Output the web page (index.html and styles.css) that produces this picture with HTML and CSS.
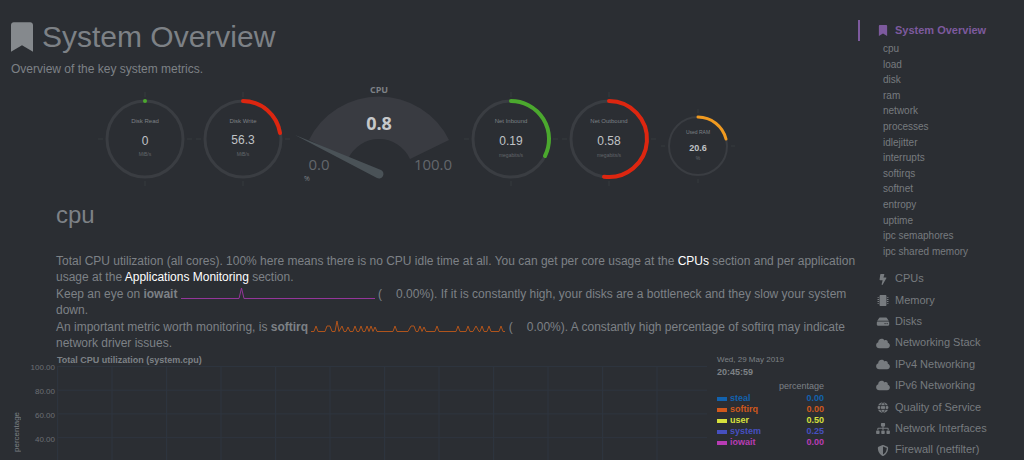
FILE: index.html
```html
<!DOCTYPE html>
<html lang="en">
<head>
  <meta charset="utf-8">
  <meta name="viewport" content="width=device-width, initial-scale=1">
  <title>System Overview</title>
  <link rel="stylesheet" href="styles.css">
</head>

<body>
<div class="page">
  <main class="main">
    <h1>
      <svg class="title-icon" viewBox="0 0 384 512"><path d="M0 512V48C0 21.49 21.49 0 48 0h288c26.51 0 48 21.49 48 48v464L192 400 0 512z"/></svg>
      System Overview
    </h1>
    <p class="intro">Overview of the key system metrics.</p>

    <!-- gauges -->
    <div class="gauges">
      <svg class="gauge" viewBox="-49 -49 98 98">
        <path class="ticks" d="M0 -47V-42M0 42V47M-47 0H-42M42 0H47"/>
        <circle class="track" r="38"/>
        <circle class="dot green" cy="-38" r="2"/>
        <text class="name" y="-16">Disk Read</text>
        <text class="value" y="6">0</text>
        <text class="unit" y="17">MiB/s</text>
      </svg>
      <svg class="gauge" viewBox="-49 -49 98 98">
        <path class="ticks" d="M0 -47V-42M0 42V47M-47 0H-42M42 0H47"/>
        <circle class="track" r="38"/>
        <path class="arc red" d="M0 -38A38 38 0 0 1 37 -6"/>
        <text class="name" y="-16">Disk Write</text>
        <text class="value" y="5">56.3</text>
        <text class="unit" y="17">MiB/s</text>
      </svg>
      <svg class="gauge-cpu" viewBox="-87 -91 170 105">
        <path class="dial" d="M-70 -34A78 78 0 0 1 70 -34L31 -15A34 34 0 0 0 -31 -15Z"/>
        <path class="needle" d="M-84 -39L2 -4A4 4 0 0 1 -2 4Z"/>
        <text class="cpu-name" y="-81">CPU</text>
        <text class="cpu-value" y="-44">0.8</text>
        <text class="cpu-limit" x="-60" y="-4">0.0</text>
        <text class="cpu-limit" x="54" y="-4">100.0</text>
        <text class="cpu-unit" x="-72" y="7">%</text>
      </svg>
      <svg class="gauge" viewBox="-49 -49 98 98">
        <path class="ticks" d="M0 -47V-42M0 42V47M-47 0H-42M42 0H47"/>
        <circle class="track" r="38"/>
        <path class="arc green" d="M0 -38A38 38 0 0 1 34 17"/>
        <text class="name" y="-16">Net Inbound</text>
        <text class="value" y="6">0.19</text>
        <text class="unit" y="18">megabits/s</text>
      </svg>
      <svg class="gauge" viewBox="-49 -49 98 98">
        <path class="ticks" d="M0 -47V-42M0 42V47M-47 0H-42M42 0H47"/>
        <circle class="track" r="38"/>
        <path class="arc red" d="M0 -38A38 38 0 1 1 -5 37.670"/>
        <text class="name" y="-16">Net Outbound</text>
        <text class="value" y="6">0.58</text>
        <text class="unit" y="18">megabits/s</text>
      </svg>
      <svg class="gauge-small" viewBox="-40 -40 80 82">
        <path class="ticks" d="M0 -37V-33M0 33V37M-37 0H-33M33 0H37"/>
        <circle class="track thin" r="29"/>
        <path class="arc thin orange" d="M0 -29A29 29 0 0 1 28 -7"/>
        <text class="name small" y="-12">Used RAM</text>
        <text class="value small" y="5">20.6</text>
        <text class="unit" y="14">%</text>
      </svg>
    </div>

    <section class="section">
      <h2>cpu</h2>
      <p>Total CPU utilization (all cores). 100% here means there is no CPU idle time at all. You can get per core usage at the <a href="#cpus">CPUs</a> section and per application usage at the <a href="#apps">Applications Monitoring</a> section.</p>
      <p>Keep an eye on <b>iowait</b>
        <svg class="spark iowait" viewBox="0 0 194 13"><path d="M0 11.5H58L60.5 1L63 11.5H194"/></svg>
        (<span class="num">0.00%</span>). If it is constantly high, your disks are a bottleneck and they slow your system down.</p>
      <p>An important metric worth monitoring, is <b>softirq</b>
        <svg class="spark softirq" viewBox="0 0 194 13"><path d="M0 11.5H3L5 6L7 11.5H14L16 6H19L21 11.5H24L26 1L28 11.5L31 6L33 11.5H35L37 7L39 11.5H42L44 6L46 11.5H48L50 6L52 11.5H54L56 6L58 11.5L60 6L62 11.5L64 7L66 11.5H82L84 6L86 11.5H97L100 6H103L105 11.5H107L109 6L111 11.5L113 7L115 11.5H124L126 6L128 11.5H145L147 6L149 11.5H155L157 6L159 11.5H162L165 6L168 11.5H169L171 6L173 11.5H176L178 6L180 11.5H188L190 6L192 11.5H194"/></svg>
        (<span class="num">0.00%</span>). A constantly high percentage of softirq may indicate network driver issues.</p>
    </section>

    <!-- system.cpu chart -->
    <div class="chart">
      <div class="ylabel">percentage</div>
      <div class="yaxis"><span>100.00</span><span>80.00</span><span>60.00</span><span>40.00</span></div>
      <div class="plot">
        <h3>Total CPU utilization (system.cpu)</h3>
        <svg class="grid" width="100%" height="120">
          <defs>
            <pattern id="cells" width="54.5" height="23.7" patternUnits="userSpaceOnUse"><path d="M0 .5H55M.5 0V24"/></pattern>
          </defs>
          <rect width="100%" height="120" fill="url(#cells)"/>
        </svg>
      </div>
      <div class="legend">
        <div>Wed, 29 May 2019</div>
        <div><b>20:45:59</b></div>
        <table>
          <thead><tr><th></th><th class="val">percentage</th></tr></thead>
          <tbody>
            <tr class="steal"><th><i></i>steal</th><td>0.00</td></tr>
            <tr class="soft"><th><i></i>softirq</th><td>0.00</td></tr>
            <tr class="user"><th><i></i>user</th><td>0.50</td></tr>
            <tr class="system"><th><i></i>system</th><td>0.25</td></tr>
            <tr class="wait"><th><i></i>iowait</th><td>0.00</td></tr>
          </tbody>
        </table>
      </div>
    </div>
  </main>

  <nav class="sidebar">
    <a class="item active" href="#system"><svg viewBox="0 0 384 512"><path d="M0 512V48C0 21.49 21.49 0 48 0h288c26.51 0 48 21.49 48 48v464L192 400 0 512z"/></svg>System Overview</a>
    <div class="sub">
      <a href="#cpu">cpu</a>
      <a href="#load">load</a>
      <a href="#disk">disk</a>
      <a href="#ram">ram</a>
      <a href="#network">network</a>
      <a href="#processes">processes</a>
      <a href="#idlejitter">idlejitter</a>
      <a href="#interrupts">interrupts</a>
      <a href="#softirqs">softirqs</a>
      <a href="#softnet">softnet</a>
      <a href="#entropy">entropy</a>
      <a href="#uptime">uptime</a>
      <a href="#semaphores">ipc semaphores</a>
      <a href="#shared">ipc shared memory</a>
    </div>
    <a class="item" href="#cpus"><svg viewBox="0 0 320 512"><path d="M296 160H180.6l42.6-129.8C227.2 15 215.7 0 200 0H56C44 0 33.8 8.9 32.2 20.8l-32 240C-1.7 275.2 9.5 288 24 288h118.7L96.6 482.5c-3.6 15.2 8 29.5 23.3 29.5 8.4 0 16.4-4.4 20.8-12l176-304c9.3-15.9-2.2-36-20.7-36z"/></svg>CPUs</a>
    <a class="item" href="#mem"><svg viewBox="0 0 512 512"><path d="M416 48v416c0 26.51-21.49 48-48 48H144c-26.51 0-48-21.49-48-48V48c0-26.51 21.49-48 48-48h224c26.51 0 48 21.49 48 48zM0 100h72v40H0zM0 190h72v40H0zM0 280h72v40H0zM0 370h72v40H0zM440 100h72v40h-72zM440 190h72v40h-72zM440 280h72v40h-72zM440 370h72v40h-72z"/></svg>Memory</a>
    <a class="item" href="#disks"><svg viewBox="0 0 576 512"><path d="M576 304v96c0 26.51-21.49 48-48 48H48c-26.51 0-48-21.49-48-48v-96c0-26.51 21.49-48 48-48h480c26.51 0 48 21.49 48 48zm-48-80a79.557 79.557 0 0 1 30.777 6.165L462.25 85.374A48.003 48.003 0 0 0 422.311 64H153.689a48 48 0 0 0-39.938 21.374L17.223 230.165A79.557 79.557 0 0 1 48 224h480zm-48 96c-17.673 0-32 14.327-32 32s14.327 32 32 32 32-14.327 32-32-14.327-32-32-32zm-96 0c-17.673 0-32 14.327-32 32s14.327 32 32 32 32-14.327 32-32-14.327-32-32-32z"/></svg>Disks</a>
    <a class="item" href="#netstack"><svg viewBox="0 0 640 512"><path d="M537.6 226.6c4.1-10.7 6.4-22.4 6.4-34.6 0-53-43-96-96-96-19.7 0-38.1 6-53.3 16.2C367 64.2 315.3 32 256 32c-88.4 0-160 71.6-160 160 0 2.7.1 5.4.2 8.1C40.2 219.8 0 273.2 0 336c0 79.5 64.5 144 144 144h368c70.7 0 128-57.3 128-128 0-61.9-44-113.6-102.4-125.4z"/></svg>Networking Stack</a>
    <a class="item" href="#ipv4"><svg viewBox="0 0 640 512"><path d="M537.6 226.6c4.1-10.7 6.4-22.4 6.4-34.6 0-53-43-96-96-96-19.7 0-38.1 6-53.3 16.2C367 64.2 315.3 32 256 32c-88.4 0-160 71.6-160 160 0 2.7.1 5.4.2 8.1C40.2 219.8 0 273.2 0 336c0 79.5 64.5 144 144 144h368c70.7 0 128-57.3 128-128 0-61.9-44-113.6-102.4-125.4z"/></svg>IPv4 Networking</a>
    <a class="item" href="#ipv6"><svg viewBox="0 0 640 512"><path d="M537.6 226.6c4.1-10.7 6.4-22.4 6.4-34.6 0-53-43-96-96-96-19.7 0-38.1 6-53.3 16.2C367 64.2 315.3 32 256 32c-88.4 0-160 71.6-160 160 0 2.7.1 5.4.2 8.1C40.2 219.8 0 273.2 0 336c0 79.5 64.5 144 144 144h368c70.7 0 128-57.3 128-128 0-61.9-44-113.6-102.4-125.4z"/></svg>IPv6 Networking</a>
    <a class="item" href="#qos"><svg viewBox="0 0 512 512"><circle cx="256" cy="256" r="248"/><path class="cut" d="M0 168H512M0 344H512M256 8C100 130 100 382 256 504C412 382 412 130 256 8"/></svg>Quality of Service</a>
    <a class="item" href="#net"><svg viewBox="0 0 640 512"><path d="M128 352H32c-17.67 0-32 14.33-32 32v96c0 17.67 14.33 32 32 32h96c17.67 0 32-14.33 32-32v-96c0-17.67-14.33-32-32-32zm-24-80h192v48h48v-48h192v48h48v-57.59c0-21.17-17.23-38.41-38.41-38.41H344v-64h40c17.67 0 32-14.33 32-32V32c0-17.67-14.33-32-32-32H256c-17.67 0-32 14.33-32 32v96c0 17.67 14.33 32 32 32h40v64H94.41C73.23 224 56 241.23 56 262.41V320h48v-48zm264 80h-96c-17.67 0-32 14.33-32 32v96c0 17.67 14.33 32 32 32h96c17.67 0 32-14.33 32-32v-96c0-17.67-14.33-32-32-32zm240 0h-96c-17.67 0-32 14.33-32 32v96c0 17.67 14.33 32 32 32h96c17.67 0 32-14.33 32-32v-96c0-17.67-14.33-32-32-32z"/></svg>Network Interfaces</a>
    <a class="item" href="#firewall"><svg viewBox="0 0 512 512"><path d="M466.5 83.7l-192-80a48.15 48.15 0 0 0-36.9 0l-192 80C27.7 91.1 16 108.6 16 128c0 198.5 114.5 335.7 221.5 380.3 11.8 4.9 25.1 4.9 36.9 0C360.1 472.6 496 349.3 496 128c0-19.4-11.7-36.9-29.5-44.3zM256.1 446.3l-.1-381 175.9 73.3c-3.3 151.4-82.1 261.1-175.8 307.7z"/></svg>Firewall (netfilter)</a>
  </nav>
</div>
</body>
</html>
```
FILE: styles.css
```css
body {margin: 0; background: #2b2e33; color: #7d8186; font: 12px/16px "Liberation Sans", Arial, sans-serif;}
h1, h2, h3, p {margin: 0; font-weight: normal;}
a {color: inherit; text-decoration: none;}
.page {display: flex; height: 100vh; overflow: hidden;}
.main {flex: 1; min-width: 0;}

h1 {display: flex; align-items: center; gap: 9px; padding: 19px 0 0 11px; font-size: 30px; line-height: 36px;}
.title-icon {width: 22px; height: 30px; fill: #85898d;}
.intro {padding: 6px 0 0 11px;}

/* gauges */
.gauges {display: flex; align-items: flex-end; justify-content: center; margin-top: 6px; padding-right: 25px;}
.gauges text {text-anchor: middle; fill: #7d8186;}
.gauge {width: 98px; height: 98px;}
.gauge-cpu {width: 170px; height: 105px;}
.gauge-small {width: 80px; height: 82px;}
.ticks {stroke: #363a3f; stroke-width: 1;}
.track {fill: none; stroke: #3a3d42; stroke-width: 3;}
.arc {fill: none; stroke-width: 4; stroke-linecap: round;}
.track.thin {stroke-width: 2;}
.arc.thin {stroke-width: 3;}
.arc.green {stroke: #4ba82e;}
.arc.red {stroke: #dd2610;}
.arc.orange {stroke: #f09a20;}
.dot.green {fill: #4ba82e;}
.gauges .name {font-size: 6px;}
.gauges .name.small {font-size: 5px;}
.gauges .value {font-size: 12px; fill: #c0c3c6;}
.gauges .value.small {font-size: 9px; font-weight: bold;}
.gauges .unit {font-size: 5px; fill: #63676b;}
.dial {fill: #393b41;}
.needle {fill: #4a5257;}
.gauge-cpu text {font-family: "Open Sans", sans-serif;}
.gauge-cpu .cpu-name {font-size: 9px; font-weight: bold;}
.gauge-cpu .cpu-value {font-size: 18px; font-weight: bold; fill: #c6c8ca;}
.gauge-cpu .cpu-limit {font-size: 15px; fill: #63676c;}
.gauge-cpu .cpu-unit {font-size: 7px;}

.section {padding: 12px 0 0 56px;}
.section h2 {font-size: 24px; line-height: 30px; margin-bottom: 23px;}
.section p {margin-bottom: 1px;}
.section a {color: #fff;}
.spark {width: 194px; height: 13px; fill: none; stroke-width: 1; vertical-align: -2px;}
.spark.iowait {stroke: #94369a;}
.spark.softirq {stroke: #b0541c;}
.num {display: inline-block; width: 48px; text-align: right;}

/* chart */
.chart {display: flex; margin-top: 3px; font-size: 9px; line-height: 12px;}
.ylabel {writing-mode: vertical-rl; transform: rotate(180deg); width: 12px; height: 98px; margin-left: 11px; font-size: 8px; text-align: left;}
.yaxis {display: flex; flex-direction: column; gap: 12px; width: 32px; padding-top: 8px; font-size: 8px; text-align: right; color: #6b6f74;}
.plot {flex: 1; padding-left: 2px;}
.plot h3 {font-size: 9px; font-weight: bold;}
.grid {display: block;}
.grid path {fill: none; stroke: #2d343e;}
.legend {width: 107px; margin: 0 34px 0 10px; font-size: 8px;}
.legend b {font-size: 9px;}
.legend table {width: 100%; border-collapse: collapse; font-size: 9px; line-height: 11px;}
.legend th, .legend td {padding: 0; text-align: left; font-weight: bold;}
.legend th.val, .legend td {text-align: right;}
.legend th.val {font-weight: normal; line-height: 14px;}
.legend i {display: inline-block; width: 10px; height: 4px; margin-right: 3px; background: currentColor;}
.steal {color: #1262ae;}
.soft {color: #d0581c;}
.user {color: #d6e03c;}
.system {color: #4650c0;}
.wait {color: #b83cb4;}

/* right menu */
.sidebar {width: 166px; padding-top: 20px; color: #777b7f; font-size: 11px;}
.item {display: flex; align-items: center; margin-bottom: 4px; padding-left: 18px; line-height: 1.58;}
.item svg {width: 14px; height: 11px; margin-right: 5px; fill: currentColor;}
.item .cut {fill: none; stroke: #2b2e33; stroke-width: 40;}
.item.active {height: 21px; margin: 0; padding-left: 16px; border-left: 2px solid #7d5a9e; color: #7d5a9e; font-weight: bold;}
.sub {margin: 0 0 11px 25px; font-size: 10px; line-height: 1.56;}
.sub a {display: block;}
```
